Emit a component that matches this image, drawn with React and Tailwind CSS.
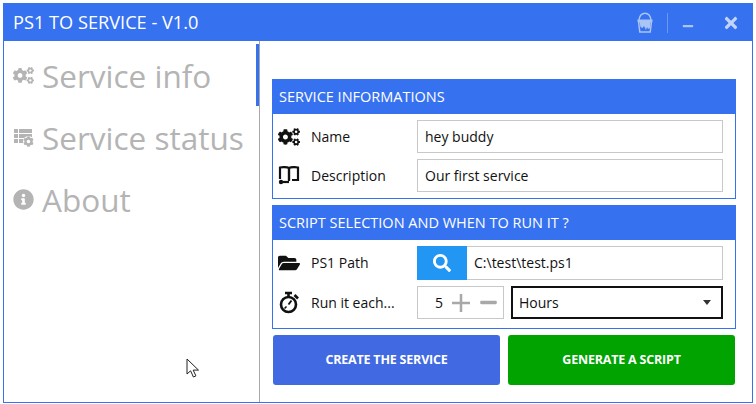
import { FaCogs, FaFolderOpen, FaInfoCircle, FaSearch, FaMinus, FaTimes, FaCog } from "react-icons/fa";

const BookIcon = () => (
  <svg width="22" height="19" viewBox="0 0 22 19" fill="none" stroke="#111" strokeWidth="2.2">
    <path d="M11 14V2C9 1 4 1 2 1.5V13" />
    <path d="M11 15V2c2-1 7-1 9-.5V14h-6" />
    <path d="M5 16h6" />
    <circle cx="3" cy="16" r="2.2" fill="#111" stroke="none" />
  </svg>
);

const TimerIcon = () => (
  <svg width="21" height="23" viewBox="0 0 21 23" fill="none" stroke="#111">
    <circle cx="9.5" cy="13.5" r="7.5" strokeWidth="2.6" />
    <path d="M6 2h7M9.5 2v4" strokeWidth="2.6" />
    <path d="M15.5 4l3.5 3.5" strokeWidth="2.6" />
    <path d="M9.5 13.5l3-4" strokeWidth="1.8" />
    <path d="M5.5 17.5l2-2" strokeWidth="1.6" />
  </svg>
);

const StatusIcon = () => (
  <div className="relative w-5 h-4 text-[#b4b4b4]">
    <svg width="20" height="16" viewBox="0 0 20 16" fill="#b4b4b4">
      <rect x="0" y="0" width="4" height="4" />
      <rect x="5" y="0" width="13" height="4" />
      <rect x="0" y="5" width="4" height="4" />
      <rect x="5" y="5" width="13" height="4" />
      <rect x="0" y="10" width="4" height="4" />
      <rect x="5" y="10" width="7" height="4" />
    </svg>
    <FaCog className="absolute right-0 -bottom-0.5 text-[11px] bg-white rounded-full" />
  </div>
);

const BucketIcon = () => (
  <svg width="18" height="22" viewBox="0 0 18 22" fill="none" stroke="#a9c4f5" strokeWidth="1.5">
    <path d="M3 9C3 -1.5 15 -1.5 15 9" />
    <path d="M1.5 8.5h15" strokeWidth="2" />
    <path d="M2.5 9.5l1.3 10.5h10.4l1.3-10.5z" />
    <path d="M3.5 10h11l-.6 6-1.9 1-1-2-1 3-2-4-1.5 2-2-1z" fill="#a9c4f5" stroke="none" />
  </svg>
);

const PlusIcon = () => (
  <svg width="18" height="18" viewBox="0 0 18 18" fill="none" stroke="#a8a8a8" strokeWidth="2.5">
    <path d="M9 0v18M0 9h18" />
  </svg>
);

const Cursor = () => (
  <svg className="absolute left-[186px] top-[358px]" width="14" height="20" viewBox="0 0 14 20" fill="white" stroke="#222" strokeWidth="1">
    <path d="M1 1v15l3.6-3.2L7.4 19l2.5-1.1-2.7-5.8H12.5z" />
  </svg>
);

const NavItem = ({ icon, label, active }) => (
  <div className="relative h-[62px] flex items-center pl-[9px] text-[#b4b4b4]">
    <div className="w-[21px] flex justify-center text-[21px]">{icon}</div>
    <span className="ml-[8px] pt-[2px] text-[31.5px] leading-none">{label}</span>
    {active && <div className="absolute right-0 top-0 bottom-0 w-[3px] bg-[#3671f0]" />}
  </div>
);

const SectionHeader = ({ children }) => (
  <div className="h-[35px] -mx-px bg-[#3671f0] text-white text-[14.5px] flex items-center pl-[7px]">
    {children}
  </div>
);

const RowLabel = ({ icon, children }) => (
  <div className="w-[144px] flex items-center shrink-0">
    <div className="w-[22px] ml-[5px] flex justify-center text-[#111]">{icon}</div>
    <span className="ml-[11px] text-[14px] text-[#111] pb-[1px]">{children}</span>
  </div>
);

const TextBox = ({ value }) => (
  <div className="flex-1 h-[33px] border border-[#c8c8c8] flex items-center pl-[7px] pb-[1px] text-[14px] text-[#111]">
    {value}
  </div>
);

export default function App() {
  return (
    <div className="relative w-[756px] h-[404px] bg-white pt-[3px] pl-[3px] pr-[3px] pb-[1px]" style={{ fontFamily: '"Open Sans", sans-serif' }}>
      <div className="w-[750px] h-[400px] border border-[#3671f0] flex flex-col">
        <div className="h-[37px] bg-[#3671f0] flex items-center shrink-0 pl-[9px]">
          <span className="text-white text-[18.2px]">PS1 TO SERVICE - V1.0</span>
          <div className="ml-auto flex items-center">
            <BucketIcon />
            <div className="w-px h-[20px] bg-[#6d97f3] ml-[13px]" />
            <FaMinus className="text-[#a9c4f5] text-[12px] ml-[14px] mt-[7px]" />
            <FaTimes className="text-[#c2d4f8] text-[18px] ml-[28px] mr-[12px]" />
          </div>
        </div>
        <div className="flex-1 flex min-h-0">
          <div className="w-[256px] border-r border-[#a8a8a8] pt-[3px] shrink-0">
            <NavItem active icon={<FaCogs />} label="Service info" />
            <NavItem icon={<StatusIcon />} label="Service status" />
            <NavItem icon={<FaInfoCircle />} label="About" />
          </div>
          <div className="flex-1 pl-[12px] pr-[16px] pt-[38px]">
            <div className="border border-t-0 border-[#3671f0] h-[120px]">
              <SectionHeader>SERVICE INFORMATIONS</SectionHeader>
              <div className="pr-[12px] pt-[6px] flex flex-col gap-[6px]">
                <div className="flex items-center h-[33px]">
                  <RowLabel icon={<FaCogs className="text-[22px]" />}>Name</RowLabel>
                  <TextBox value="hey buddy" />
                </div>
                <div className="flex items-center h-[33px]">
                  <RowLabel icon={<BookIcon />}>Description</RowLabel>
                  <TextBox value="Our first service" />
                </div>
              </div>
            </div>
            <div className="border border-t-0 border-[#3671f0] h-[124px] mt-[6px]">
              <SectionHeader>SCRIPT SELECTION AND WHEN TO RUN IT ?</SectionHeader>
              <div className="pr-[12px] pt-[6px] flex flex-col gap-[6px]">
                <div className="flex items-center h-[34px]">
                  <RowLabel icon={<FaFolderOpen className="text-[22px]" />}>PS1 Path</RowLabel>
                  <div className="flex-1 h-[34px] flex">
                    <div className="w-[50px] bg-[#2196f3] flex items-center justify-center text-white text-[18px]">
                      <FaSearch />
                    </div>
                    <div className="flex-1 border border-l-0 border-[#c8c8c8] flex items-center pl-[7px] pb-[1px] text-[14px] text-[#111]">
                      C:\test\test.ps1
                    </div>
                  </div>
                </div>
                <div className="flex items-center h-[33px]">
                  <RowLabel icon={<TimerIcon />}>Run it each...</RowLabel>
                  <div className="w-[87px] h-[33px] border border-[#c8c8c8] flex items-center shrink-0 text-[14px] text-[#111]">
                    <span className="ml-[17px]">5</span>
                    <div className="ml-[9px]"><PlusIcon /></div>
                    <FaMinus className="text-[#a8a8a8] text-[19px] ml-[9px]" />
                  </div>
                  <div className="ml-[7px] flex-1 h-[33px] border-2 border-[#111] flex items-center pl-[6px] pr-[10px] pb-[1px] text-[14px] text-[#111]">
                    Hours
                    <div className="ml-auto w-0 h-0 border-l-[4px] border-r-[4px] border-t-[5px] border-l-transparent border-r-transparent border-t-[#333]" />
                  </div>
                </div>
              </div>
            </div>
            <div className="flex gap-[8px] mt-[6px] pl-px pr-px">
              <button className="w-[227px] h-[50px] rounded-[3px] bg-[#4169e1] text-white text-[12.5px] font-bold tracking-[-0.2px]">
                CREATE THE SERVICE
              </button>
              <button className="w-[227px] h-[50px] rounded-[3px] bg-[#00a300] text-white text-[12.5px] font-bold tracking-[-0.2px]">
                GENERATE A SCRIPT
              </button>
            </div>
          </div>
        </div>
      </div>
      <Cursor />
    </div>
  );
}
